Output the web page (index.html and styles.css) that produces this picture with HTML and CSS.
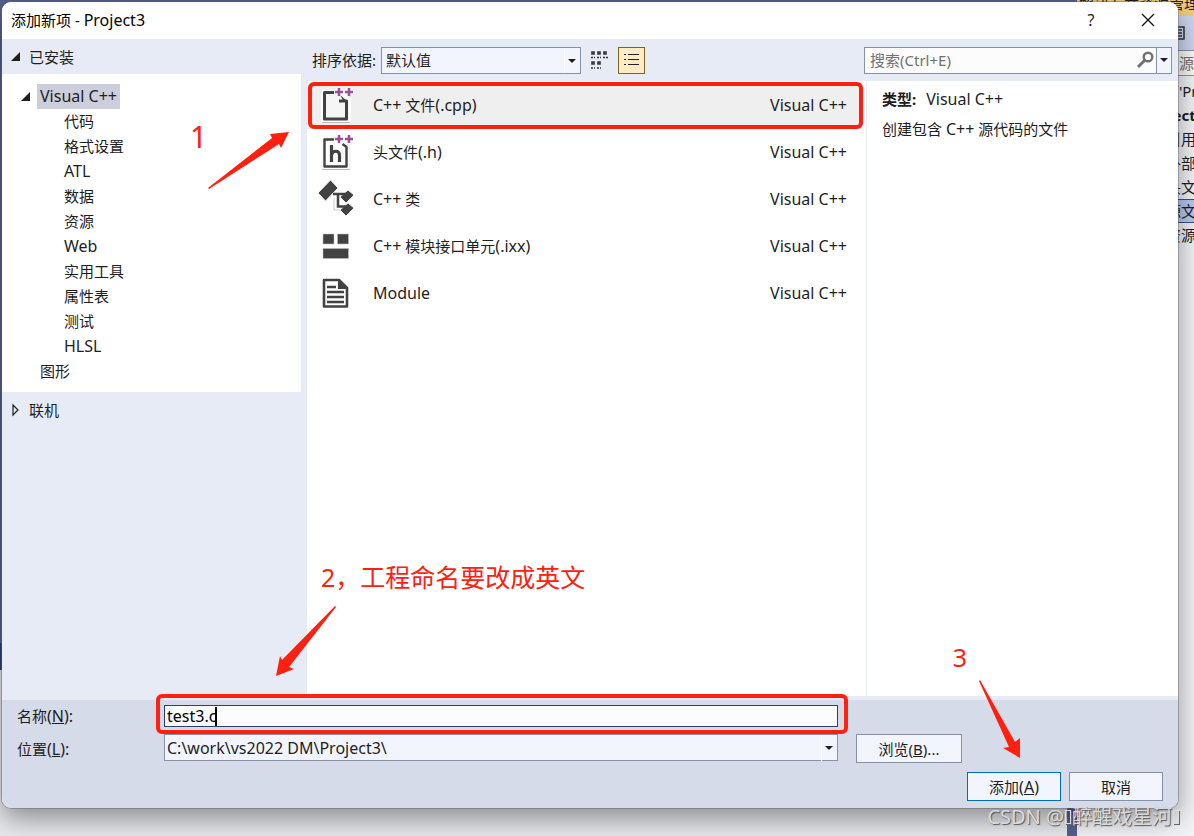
FILE: index.html
```html
<!DOCTYPE html>
<html lang="zh-CN">
<head>
<meta charset="utf-8">
<title>添加新项 - Project3</title>
<link rel="stylesheet" href="styles.css">
</head>
<body>
<div class="desktop" aria-hidden="true">
  <div class="desktop-edge"></div>
  <div class="explorer">
    <div class="explorer-title">解决方案资源管理器</div>
    <div class="explorer-tools"><svg width="10" height="14" viewBox="0 0 10 14"><path d="M0 1h9v12H0M2 4h5M2 7h5M2 10h5" fill="none" stroke="#333" stroke-width="1.500"/></svg></div>
    <div class="explorer-search">资源管理器</div>
    <ul class="explorer-tree">
      <li>程 'Project3'</li>
      <li class="bold">ject3</li>
      <li class="nested">引用</li>
      <li class="nested">外部依赖项</li>
      <li class="nested">头文件</li>
      <li class="nested current">源文件</li>
      <li class="nested">资源文件</li>
    </ul>
  </div>
  <div class="divider-bar"></div>
</div>

<main class="dialog">
  <header class="titlebar">
    <h1>添加新项 - <span class="latin">Project3</span></h1>
    <button class="caption help" type="button" aria-label="帮助">?</button>
    <button class="caption" type="button" aria-label="关闭"><svg width="14" height="14" viewBox="0 0 14 14"><path d="M1 1l12 12M13 1L1 13" stroke="#111" stroke-width="1.3"/></svg></button>
  </header>

  <div class="content">
    <nav class="sidebar">
      <div class="group"><svg width="10" height="10" viewBox="0 0 10 10"><path d="M9 0v9H0z" fill="#1e1e1e"/></svg>已安装</div>
      <div class="tree">
        <div class="tree-root"><svg width="10" height="10" viewBox="0 0 10 10"><path d="M9 0v9H0z" fill="#1e1e1e"/></svg><span class="selected latin">Visual C++</span></div>
        <ul>
          <li>代码</li><li>格式设置</li><li class="latin">ATL</li><li>数据</li><li>资源</li><li class="latin">Web</li><li>实用工具</li><li>属性表</li><li>测试</li><li class="latin">HLSL</li>
        </ul>
        <div class="tree-sibling">图形</div>
        <div class="note note-one">1</div>
        <svg class="arrow arrow-one" width="84" height="60" viewBox="0 0 84 60"><path d="M2 57L66 7 64 3 83 1 75 17l-2-4L3 58z" fill="#ff2010"/></svg>
      </div>
      <div class="group online"><svg width="10" height="12" viewBox="0 0 10 12"><path d="M2 1v10l5-5z" fill="none" stroke="#1e1e1e" stroke-width="1.2"/></svg>联机</div>
    </nav>

    <section class="workspace">
      <div class="toolbar">
        <label for="sort">排序依据:</label>
        <div class="select-box sort">
          <select id="sort"><option>默认值</option></select>
          <svg class="chevron" width="8" height="5" viewBox="0 0 8 5"><path d="M0 0h8L4 4z" fill="#1e1e1e"/></svg>
        </div>
        <button class="view" type="button" aria-label="图标视图"><svg width="18" height="20" viewBox="0 0 18 20"><g fill="none" stroke="#333" stroke-width="1.6"><path d="M1 2h2v2H1zM7 2h2v2H7zM13 2h2v2h-2zM1 12h2v2H1zM7 12h2v2H7z"/><path d="M0 7.500h4M6 7.500h4M12 7.500h5M0 18h4M6 18h4" stroke-dasharray="2 1"/></g></svg></button>
        <button class="view active" type="button" aria-label="列表视图"><svg width="16" height="14" viewBox="0 0 16 14"><path d="M4 1.500h11M4 6.500h11M4 11.500h11M0 1.500h2M0 6.500h2M0 11.500h2" stroke="#222" stroke-width="1.200"/></svg></button>
        <div class="search">
          <input type="search" aria-label="搜索" placeholder="搜索(Ctrl+E)">
          <button type="button" aria-label="搜索"><svg width="18" height="18" viewBox="0 0 18 18"><circle cx="11" cy="6" r="4.300" fill="none" stroke="#717171" stroke-width="2.400"/><path d="M8 9L1 16" stroke="#717171" stroke-width="3"/></svg></button>
          <button class="search-menu" type="button" aria-label="搜索选项"><svg width="8" height="5" viewBox="0 0 8 5"><path d="M0 0h8L4 4z" fill="#1e1e1e"/></svg></button>
        </div>
      </div>

      <div class="panes">
        <ul class="templates">
          <li class="chosen">
            <svg width="36" height="36" viewBox="0 0 36 36"><path d="M5 4h10l8 2 8 7v22H3V6z" fill="#f6f6f6" stroke="#fff" stroke-width="2"/><path d="M3 35.500h28" stroke="#bbb"/><path d="M15 5.500H5.500v26.500h22V14H20" fill="none" stroke="#424242" stroke-width="3" stroke-linejoin="round"/><path d="M21 8l8 7h-4z" fill="#424242"/><path d="M16 5h8M20 1v8M26 5h8M30 1v8" stroke="#fff" stroke-width="5"/><path d="M16 5h8M20 1v8M26 5h8M30 1v8" stroke="#9b4f96" stroke-width="2.600"/></svg>
            <span><span class="latin">C++</span> 文件<span class="latin">(.cpp)</span></span><span class="latin">Visual C++</span>
          </li>
          <li>
            <svg width="36" height="36" viewBox="0 0 36 36"><path d="M5 4h10l8 2 8 7v22H3V6z" fill="#fff" stroke="#eee"/><path d="M3 35.500h28" stroke="#bbb"/><path d="M15 5.500H5.500v27h22V13l-4-3" fill="none" stroke="#424242" stroke-width="2.400" stroke-linejoin="round"/><path d="M12.500 11v17M12.500 21c1-5 8-5 8 0v7" fill="none" stroke="#424242" stroke-width="3.200"/><path d="M16 5h8M20 1v8M26 5h8M30 1v8" stroke="#fff" stroke-width="5"/><path d="M16 5h8M20 1v8M26 5h8M30 1v8" stroke="#9b4f96" stroke-width="2.600"/></svg>
            <span>头文件<span class="latin">(.h)</span></span><span class="latin">Visual C++</span>
          </li>
          <li>
            <svg width="36" height="36" viewBox="0 0 36 36"><g fill="#424242" stroke="#eee"><path d="M-1 12L11.500-1 19 7 6.500 20zM21 16l8-7 6 5-8 8zM21 29l8-7 6 5-8 8z"/></g><path d="M14 13h13M19 13v12.500H27" fill="none" stroke="#424242" stroke-width="2.500"/><path d="M15 17v12h6" fill="none" stroke="#ccc"/></svg>
            <span><span class="latin">C++</span> 类</span><span class="latin">Visual C++</span>
          </li>
          <li>
            <svg width="36" height="36" viewBox="0 0 36 36"><path d="M4 6h11v10H4zM18.500 6h11v10h-11zM4 20.500h25.500v10H4z" fill="#424242" stroke="#bbb" stroke-width=".6"/></svg>
            <span><span class="latin">C++</span> 模块接口单元<span class="latin">(.ixx)</span></span><span class="latin">Visual C++</span>
          </li>
          <li>
            <svg width="36" height="36" viewBox="0 0 36 36"><path d="M5 5h15l8 8v18.500H5z" fill="#fff" stroke="#424242" stroke-width="2.600" stroke-linejoin="round"/><path d="M19 4l10 10H19z" fill="#424242"/><path d="M8 12h9M8 17h17M8 22h17M8 27h17" stroke="#424242" stroke-width="2.400"/></svg>
            <span class="latin">Module</span><span class="latin">Visual C++</span>
          </li>
        </ul>
        <aside class="details">
          <p><b>类型:</b><span class="latin">Visual C++</span></p>
          <p>创建包含 <span class="latin">C++</span> 源代码的文件</p>
        </aside>
        <div class="note note-two">2，工程命名要改成英文</div>
      </div>
    </section>
  </div>

  <form class="footer">
    <div class="fields">
      <label for="name">名称<span class="latin">(<u>N</u>):</span></label>
      <div class="name-box"><input class="latin" id="name" type="text" value="test3.c"><i class="caret"></i></div>
      <label for="place">位置<span class="latin">(<u>L</u>):</span></label>
      <div class="select-box">
        <select class="place" id="place"><option>C:\work\vs2022 DM\Project3\</option></select>
        <svg class="chevron" width="8" height="5" viewBox="0 0 8 5"><path d="M0 0h8L4 4z" fill="#1e1e1e"/></svg>
      </div>
      <button class="push" type="button">浏览(<u>B</u>)...</button>
    </div>
    <div class="actions">
      <button class="push primary" type="button">添加<span class="latin">(<u>A</u>)</span></button>
      <button class="push" type="button">取消</button>
    </div>
    <svg class="arrow arrow-two" width="64" height="72" viewBox="0 0 64 72"><path d="M61 0L8 54 6 50 2 70l18-7-5-2L62 1z" fill="#ff2010"/></svg>
    <div class="note note-three">3</div>
    <svg class="arrow arrow-three" width="46" height="80" viewBox="0 0 46 80"><path d="M3 1L38 63l5-4v20L26 69l6-1L2 2z" fill="#ff2010"/></svg>
  </form>
</main>
<div class="watermark">CSDN @<i></i>醉醒戏星河<i></i></div>
</body>
</html>
```
FILE: styles.css
```css
* { box-sizing: border-box; }
body {
  margin: 0;
  position: relative;
  display: flex;
  min-height: 100vh;
  padding: 2px 16px 28px 2px;
  overflow: hidden;
  background: #e9eaee;
  color: #1e1e1e;
  font: 15px/20px "Noto Sans", "Noto Sans CJK SC", sans-serif;
}
ul { list-style: none; margin: 0; padding: 0; }
p, h1 { margin: 0; }
svg { display: block; flex: none; overflow: visible; }
button, input, select { font: inherit; color: inherit; margin: 0; border-radius: 0; }
button { padding: 0; border: 0; background: none; }
.latin { font-size: 16px; }

/* IDE window behind the dialog */
.desktop { position: absolute; inset: 0; }
.desktop-edge { position: absolute; left: 0; right: 0; top: 0; height: 643px; background: #56628f; }
.desktop-edge::after { content: ""; position: absolute; left: 0; top: 100%; width: 8px; height: 27px; background: #2f4078; }
.explorer { position: absolute; right: 0; top: 0; bottom: 0; width: 117px; background: #f3f4f8; overflow: hidden; white-space: nowrap; }
.explorer-title { height: 16px; padding-left: 2px; line-height: 7px; background: #f3cc80; }
.explorer-tools { display: flex; justify-content: flex-end; align-items: center; height: 34px; padding-right: 9px; background: #ccd6f0; }
.explorer-search { height: 26px; padding-left: 87px; line-height: 24px; color: #717171; background: #fafafa; border: 1px solid #8a94ae; border-width: 1px 0; }
.explorer-tree { padding-top: 3px; }
.explorer-tree li { height: 24px; line-height: 24px; padding-left: 83px; }
.explorer-tree .bold { font-weight: 700; padding-left: 91px; }
.explorer-tree .nested { padding-left: 89px; }
.explorer-tree .current { background: #b8c8f2; border: 1px solid #35508f; border-width: 1px 0; line-height: 22px; }
.divider-bar { position: absolute; right: 117px; bottom: 0; width: 10px; height: 40px; background: #56628f; }

.dialog {
  position: relative;
  flex: 1;
  display: flex;
  flex-direction: column;
  min-width: 0;
  background: #e6ebf5;
  border-radius: 9px;
  box-shadow: 0 0 0 1px rgba(90, 95, 105, .4), 0 10px 28px rgba(0, 0, 0, .42);
}
.titlebar { display: flex; align-items: center; height: 37px; padding: 0 8px 2px 9px; background: #fff; border-radius: 9px 9px 0 0; }
.titlebar h1 { flex: 1; font-size: 15px; font-weight: 400; color: #000; }
.caption { display: flex; justify-content: center; align-items: center; width: 44px; height: 32px; }
.help { width: 70px; font-size: 16px; }

.content { flex: 1; display: flex; min-height: 0; }
.sidebar { width: 305px; flex: none; }
.group { display: flex; align-items: center; gap: 8px; height: 35px; padding-left: 9px; }
.tree { position: relative; margin-right: 6px; padding: 10px 0 8px; background: #fff; line-height: 25px; }
.tree-root { display: flex; align-items: center; gap: 6px; padding-left: 19px; }
.selected { padding: 0 3px; background: #cccedb; }
.tree li { height: 25px; padding-left: 62px; }
.tree-sibling { padding-left: 38px; }

.workspace { flex: 1; display: flex; flex-direction: column; min-width: 0; }
.toolbar { display: flex; align-items: center; height: 42px; padding: 0 6px 0 5px; }
.select-box { position: relative; display: flex; }
.select-box select { appearance: none; width: 100%; height: 27px; padding: 0 24px 0 4px; background: #f2f5fd; border: 1px solid #8591a9; }
.select-box .place { padding-left: 2px; font-size: 16px; }
.select-box::after { content: ""; position: absolute; right: 16px; top: 1px; bottom: 1px; width: 1px; background: #fff; }
.chevron { position: absolute; right: 5px; top: 12px; pointer-events: none; }
.sort { width: 200px; margin: 0 5px; }
.view { display: flex; align-items: center; justify-content: center; width: 27px; height: 27px; margin-right: 5px; }
.active { margin: 0; background: #ffecc4; border: 1px solid #7f6220; }
.search { display: flex; width: 308px; height: 27px; margin-left: auto; background: #fcfcfc; border: 1px solid #8591a9; }
.search input { flex: 1; min-width: 0; padding: 0 5px; border: 0; background: none; }
.search input::placeholder { color: #717171; opacity: 1; }
.search button { display: flex; align-items: center; justify-content: center; width: 20px; }
.search .search-menu { width: 15px; border-left: 1px solid #8591a9; background: #f2f5fd; }

.panes { position: relative; flex: 1; display: flex; background: #fff; }
.templates { flex: 1; padding: 1px 3px 0 0; }
.templates li { position: relative; display: flex; align-items: center; height: 47px; padding: 0 16px 2px 12px; }
.templates li svg { margin-right: 18px; }
.templates > li > span:last-child { margin-left: auto; }
.chosen { background: #efefef; }
.chosen::after, .name-box::after { content: ""; position: absolute; border: 4px solid #ff2010; border-radius: 6px; pointer-events: none; }
.chosen::after { inset: 0 0 0 1px; }
.details { width: 312px; flex: none; padding: 8px 15px; border-left: 1px solid #e6ebf5; }
.details p { margin-bottom: 10px; }
.details b { margin-right: 10px; }

.footer { position: relative; margin-top: 4px; padding: 5px 15px 7px; background: #d5dbe9; border-radius: 0 0 9px 9px; }
.fields { display: grid; grid-template-columns: 147px 1fr 124px; row-gap: 7px; margin-right: 201px; }
.fields label { align-self: center; grid-column: 1; }
.name-box { position: relative; height: 22px; }
.name-box::after { inset: -11px -10px -7px -8px; }
.name-box input { display: block; width: 100%; height: 22px; padding: 0 2px; color: #000; background: #fcfcfc; border: 1px solid #293f77; }
.caret { position: absolute; left: 51px; top: 2px; width: 2px; height: 19px; background: #000; }
.push { width: 94px; height: 29px; background: #f2f5fd; border: 1px solid #8591a9; }
.fields .push { width: 106px; margin-left: 18px; }
.primary { border-color: #006cbe; }
.actions { display: flex; justify-content: flex-end; gap: 8px; margin-top: 9px; }

/* Hand-drawn callouts */
.note { position: absolute; color: #ff2010; font-size: 25px; line-height: 32px; white-space: nowrap; }
.arrow { position: absolute; pointer-events: none; }
.note-one { left: 188px; top: 47px; font-size: 30px; }
.arrow-one { left: 204px; top: 57px; }
.note-two { left: 14px; bottom: 103px; }
.arrow-two { left: 272px; bottom: 130px; }
.note-three { right: 211px; bottom: 135px; }
.arrow-three { right: 155px; bottom: 49px; }

.watermark { position: absolute; right: 14px; bottom: 6px; font-size: 20px; line-height: 26px; color: #d9dadd; text-shadow: 1px 1px 1px #555; }
.watermark i { display: inline-block; width: 6px; height: 14px; margin: 0 1px; border: 1px solid #ddd; box-shadow: 1px 1px 0 #666; }
```
